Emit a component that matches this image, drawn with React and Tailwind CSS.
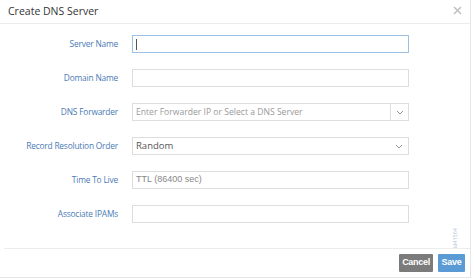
import React from 'react';

const Chevron = () => (
    <svg width="8" height="5" viewBox="0 0 8 5" fill="none">
        <path d="M1 1l3 3 3-3" stroke="#999" strokeWidth="1" />
    </svg>
);

const Row = ({ label, children }) => (
    <div className="flex items-center h-[18px]">
        <div className="w-[118px] text-right text-[8.4px] tracking-[-0.2px] text-[#4a7bb5]">{label}</div>
        <div className="ml-[14px] w-[277px] h-[18px]">{children}</div>
    </div>
);

const App = () => {
    return (
        <div className="w-[474px] h-[280px] bg-white relative overflow-hidden" style={{ fontFamily: '"Open Sans", "Liberation Sans", sans-serif' }}>
            <div className="w-[471px] h-[278px] border-r border-b border-[#e6e6e6] flex flex-col">
                <div className="h-[24px] flex items-center justify-between pl-[8px] pr-[8px] border-b border-[#ececec]">
                    <span className="text-[10.5px] text-[#333]">Create DNS Server</span>
                    <svg width="9" height="9" viewBox="0 0 9 9" fill="none" className="-mt-[2px]">
                        <path d="M1 1l7 7M8 1l-7 7" stroke="#c2c2c2" strokeWidth="1.6" />
                    </svg>
                </div>

                <div className="flex flex-col gap-[16px] pt-[11px]">
                    <Row label="Server Name">
                        <div className="h-full border border-[#9dc1e6] bg-white flex items-center pl-[3px]">
                            <div className="w-[1px] h-[11px] bg-[#555]" />
                        </div>
                    </Row>
                    <Row label="Domain Name">
                        <div className="h-full border border-[#ddd] bg-white" />
                    </Row>
                    <Row label="DNS Forwarder">
                        <div className="h-full border border-[#ddd] bg-white flex items-center">
                            <span className="flex-1 pl-[3px] text-[8.6px] text-[#999]">Enter Forwarder IP or Select a DNS Server</span>
                            <div className="w-[18px] h-full border-l border-[#ddd] flex items-center justify-center">
                                <Chevron />
                            </div>
                        </div>
                    </Row>
                    <Row label="Record Resolution Order">
                        <div className="h-full border border-[#ddd] bg-white flex items-center">
                            <span className="flex-1 pl-[3px] text-[9.5px] text-[#555]">Random</span>
                            <div className="w-[18px] h-full flex items-center justify-center">
                                <Chevron />
                            </div>
                        </div>
                    </Row>
                    <Row label="Time To Live">
                        <div className="h-full border border-[#ddd] bg-white flex items-center pl-[3px]">
                            <span className="text-[9px] text-[#888]" style={{ fontFamily: '"Liberation Sans", sans-serif' }}>TTL (86400 sec)</span>
                        </div>
                    </Row>
                    <Row label="Associate IPAMs">
                        <div className="h-full border border-[#ddd] bg-white" />
                    </Row>
                </div>

                <div className="flex-1 relative">
                    <span className="absolute right-[11px] top-[5px] text-[5.5px] text-[#b8c8dc] [writing-mode:vertical-rl] rotate-180">id41564</span>
                </div>

                <div className="border-t border-[#ececec] ml-[4px] h-[29px] flex items-center justify-end gap-[5px] pr-[5px]">
                    <button className="h-[18px] w-[34px] bg-[#7b7b7b] text-white text-[9px] font-bold tracking-[-0.3px] rounded-[1px]" style={{ fontFamily: '"Liberation Sans", sans-serif' }}>Cancel</button>
                    <button className="h-[18px] w-[27px] bg-[#5b9bd5] text-white text-[9px] font-bold tracking-[-0.3px] rounded-[1px]" style={{ fontFamily: '"Liberation Sans", sans-serif' }}>Save</button>
                </div>
            </div>
        </div>
    );
};

export default App;
